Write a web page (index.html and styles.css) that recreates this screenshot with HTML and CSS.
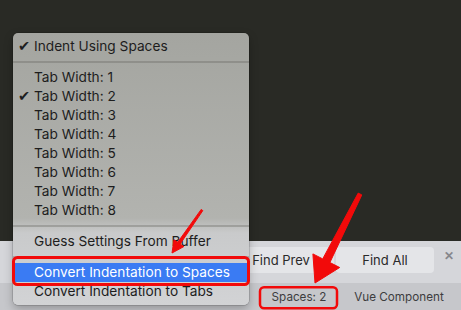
FILE: index.html
```html
<!DOCTYPE html>
<html lang="en">
<head>
    <meta charset="UTF-8">
    <title>Indentation Menu</title>
    <link rel="stylesheet" href="styles.css">
</head>
<body>
    <div class="editor">
        <div class="code-area"></div>

        <div class="find-panel">
            <div class="find-spacer"></div>
            <div class="find-btn find-prev">Find Prev</div>
            <div class="find-btn find-all">Find All</div>
            <div class="find-close">&#x2715;</div>
        </div>

        <div class="status-bar">
            <span class="status-item spaces">Spaces: 2</span>
            <span class="status-item syntax">Vue Component</span>
        </div>
    </div>

    <!-- Indentation popup menu -->
    <div class="menu">
        <div class="menu-item checked">Indent Using Spaces</div>
        <div class="menu-sep"></div>
        <div class="menu-item">Tab Width: 1</div>
        <div class="menu-item checked">Tab Width: 2</div>
        <div class="menu-item">Tab Width: 3</div>
        <div class="menu-item">Tab Width: 4</div>
        <div class="menu-item">Tab Width: 5</div>
        <div class="menu-item">Tab Width: 6</div>
        <div class="menu-item">Tab Width: 7</div>
        <div class="menu-item">Tab Width: 8</div>
        <div class="menu-sep"></div>
        <div class="menu-item">Guess Settings From Buffer</div>
        <div class="menu-sep"></div>
        <div class="menu-item active">Convert Indentation to Spaces</div>
        <div class="menu-item">Convert Indentation to Tabs</div>
    </div>

    <!-- red annotations -->
    <svg class="marks" width="461" height="310" viewBox="0 0 461 310">
        <rect x="13.5" y="257.5" width="235" height="27" rx="4" fill="none" stroke="#f20a0a" stroke-width="3"/>
        <rect x="260" y="287.2" width="77" height="21" rx="4" fill="none" stroke="#f20a0a" stroke-width="2.5"/>
        <polygon points="202.8,210.6 180.1,244.1 183.8,246.6 172,253 174,239.8 177.7,242.3 201.2,209.4"
                 fill="#f20a0a" stroke="#f20a0a" stroke-width="1" stroke-linejoin="round"/>
        <polygon points="361.8,194.9 329.9,262.5 339.7,267.5 315,283 312.9,253.9 322.7,258.9 358.2,193.1"
                 fill="#f20a0a" stroke="#f20a0a" stroke-width="1" stroke-linejoin="round"/>
    </svg>
</body>
</html>
```

FILE: styles.css
```css
body {
    margin: 0;
    width: 461px;
    height: 310px;
    overflow: hidden;
    font-family: 'Inter', 'Noto Sans', sans-serif;
    background-color: #292a25;
}
.editor {
    display: flex;
    flex-direction: column;
    height: 310px;
}
.code-area {
    flex: 1;
    background-color: #292a25;
}
.find-panel {
    height: 42px;
    display: flex;
    align-items: center;
    gap: 2px;
    background-color: #d5d6da;
    box-sizing: border-box;
    padding-bottom: 4px;
}
.find-spacer {
    flex: 1;
}
.find-btn {
    height: 26px;
    line-height: 26px;
    border-radius: 4px;
    background-color: #e4e5e8;
    color: #2a2a2a;
    font-size: 13px;
    text-align: center;
}
.find-prev {
    width: 106px;
}
.find-all {
    width: 98px;
}
.find-close {
    width: 25px;
    align-self: flex-start;
    margin-top: 7px;
    text-align: center;
    color: #86878c;
    font-size: 12px;
    font-weight: bold;
}
.status-bar {
    height: 27px;
    display: flex;
    justify-content: flex-end;
    align-items: center;
    gap: 15px;
    padding-right: 17px;
    background-color: #c6c7cb;
    color: #3d3d3f;
    font-size: 11.7px;
}
.status-item {
    text-align: center;
    white-space: nowrap;
}
.spaces {
    width: 80px;
}
.syntax {
    width: 90px;
}
.menu {
    position: absolute;
    left: 13px;
    top: 33px;
    width: 236px;
    padding: 4px 0;
    border-radius: 5px;
    background: linear-gradient(#a4a5a0 0px, #b2b3af 185px, #c9cacb 200px, #d2d3d5 272px);
    box-shadow: 0 0 0 0.5px rgba(0, 0, 0, 0.25), 0 4px 10px rgba(0, 0, 0, 0.25);
    font-size: 13.7px;
    color: #1d1d1d;
}
.menu-item {
    position: relative;
    height: 19px;
    line-height: 19px;
    padding-left: 21px;
    white-space: nowrap;
}
.menu-item.checked::before {
    content: '\2714';
    position: absolute;
    left: 5px;
    font-family: 'DejaVu Sans', sans-serif;
    font-size: 14.5px;
}
.menu-item.active {
    background-color: #3a7bf3;
    color: white;
}
.menu-sep {
    height: 2px;
    margin: 5px 0;
    background-color: rgba(100, 100, 95, 0.35);
}
.marks {
    position: absolute;
    left: 0;
    top: 0;
}
```
